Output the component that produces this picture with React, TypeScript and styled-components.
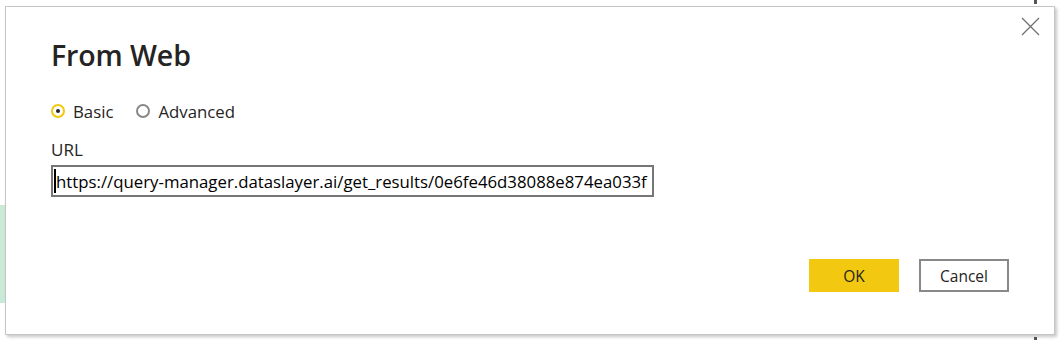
import styled, { createGlobalStyle } from 'styled-components';

const GlobalStyle = createGlobalStyle`
  html, body {
    margin: 0;
    padding: 0;
    background: #ffffff;
  }
  body {
    font-family: "Open Sans", "Noto Sans", Arial, sans-serif;
    color: #252423;
  }
`;

const Desktop = styled.div`
  position: relative;
  width: 1062px;
  height: 340px;
  overflow: hidden;
  background: #ffffff;
`;

// bits of the report canvas peeking out behind the dialog
const CanvasStrip = styled.div`
  position: absolute;
  left: 0;
  top: 205px;
  width: 5px;
  height: 98px;
  background: #c9ead6;
`;

interface TickProps {
  left: number;
  top: number;
}

const Tick = styled.div<TickProps>`
  position: absolute;
  left: ${({ left }) => left}px;
  top: ${({ top }) => top}px;
  width: 3px;
  height: 4px;
  background: #555555;
`;

const Dialog = styled.div`
  position: absolute;
  left: 5px;
  top: 6px;
  width: 1050px;
  height: 329px;
  border: 1px solid #c6c6c6;
  background: #ffffff;
  box-shadow: 2px 2px 3px rgba(0, 0, 0, 0.22);
  display: flex;
  flex-direction: column;
  padding: 27px 45px 42px 45px;
  box-sizing: border-box;
`;

const CloseButton = styled.button`
  position: absolute;
  top: 3px;
  right: 8px;
  width: 32px;
  height: 32px;
  padding: 0;
  border: none;
  background: transparent;
  display: flex;
  align-items: center;
  justify-content: center;
  cursor: pointer;
`;

const Title = styled.h1`
  margin: 0;
  font-size: 28.5px;
  line-height: 42px;
  font-weight: 600;
  color: #252423;
  letter-spacing: -0.1px;
`;

const RadioGroup = styled.div`
  display: flex;
  align-items: center;
  gap: 23px;
  margin-top: 23px;
  height: 24px;
`;

const RadioOption = styled.label`
  display: flex;
  align-items: center;
  gap: 8px;
  font-size: 16.8px;
  color: #252423;
  cursor: pointer;
`;

interface DotProps {
  checked: boolean;
}

const RadioDot = styled.span<DotProps>`
  width: 14px;
  height: 14px;
  box-sizing: border-box;
  border-radius: 50%;
  border: 2.5px solid ${({ checked }) => (checked ? '#f2c811' : '#8a8886')};
  display: flex;
  align-items: center;
  justify-content: center;

  &::after {
    content: '';
    width: 4px;
    height: 4px;
    border-radius: 50%;
    background: ${({ checked }) => (checked ? '#252423' : 'transparent')};
  }
`;

const FieldLabel = styled.div`
  margin-top: 15px;
  font-size: 17px;
  line-height: 24px;
  color: #252423;
`;

const UrlBox = styled.div`
  margin-top: 3px;
  width: 603px;
  height: 32px;
  box-sizing: border-box;
  border: 2px solid #767676;
  display: flex;
  align-items: center;
  padding-left: 1px;
  overflow: hidden;
  white-space: nowrap;
  font-size: 16.8px;
  color: #000000;
`;

const Caret = styled.span`
  width: 2px;
  height: 24px;
  background: #000000;
  flex-shrink: 0;
`;

const Footer = styled.div`
  margin-top: auto;
  display: flex;
  justify-content: flex-end;
  gap: 20px;
`;

interface ButtonProps {
  primary?: boolean;
}

const Button = styled.button<ButtonProps>`
  width: 90px;
  height: 33px;
  box-sizing: border-box;
  font-family: "Open Sans", "Noto Sans", Arial, sans-serif;
  font-size: 15.5px;
  color: #252423;
  background: ${({ primary }) => (primary ? '#f2c811' : '#ffffff')};
  border: ${({ primary }) => (primary ? 'none' : '2px solid #8a8886')};
  cursor: pointer;
`;

const App = () => {
  return (
    <Desktop>
      <GlobalStyle />
      <CanvasStrip />
      <Tick left={1034} top={0} />
      <Tick left={1034} top={337} />

      <Dialog>
        <CloseButton aria-label="Close">
          <svg width="19" height="19" viewBox="0 0 19 19">
            <path d="M1 1 L18 18 M18 1 L1 18" stroke="#6e6e6e" strokeWidth="1.2" fill="none" />
          </svg>
        </CloseButton>

        <Title>From Web</Title>

        <RadioGroup>
          <RadioOption>
            <RadioDot checked />
            Basic
          </RadioOption>
          <RadioOption>
            <RadioDot checked={false} />
            Advanced
          </RadioOption>
        </RadioGroup>

        <FieldLabel>URL</FieldLabel>
        <UrlBox>
          <Caret />
          https://query-manager.dataslayer.ai/get_results/0e6fe46d38088e874ea033f
        </UrlBox>

        <Footer>
          <Button primary>OK</Button>
          <Button>Cancel</Button>
        </Footer>
      </Dialog>
    </Desktop>
  );
};

export default App;
